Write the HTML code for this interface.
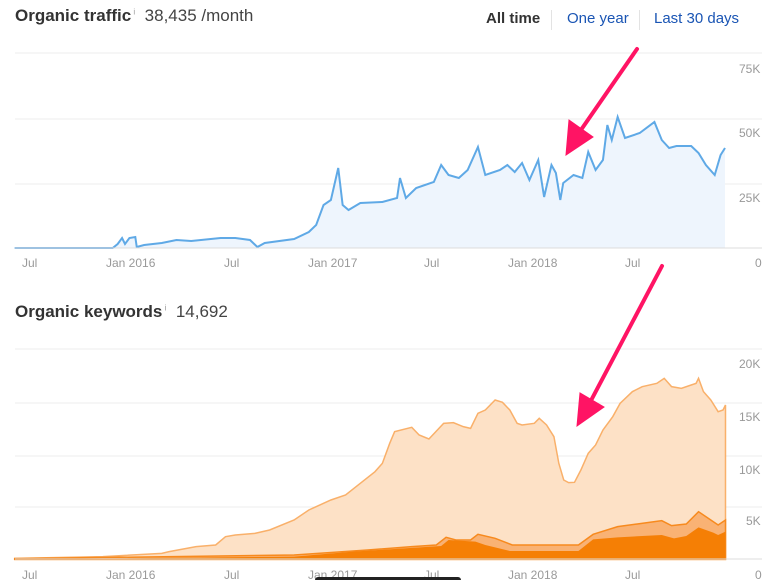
<!DOCTYPE html>
<html><head><meta charset="utf-8"><style>
body{margin:0;width:768px;height:580px;background:#fff;overflow:hidden;font-family:"Liberation Sans",sans-serif;position:relative}
.t{position:absolute;white-space:nowrap}
</style></head><body>
<div class="t" style="left:15px;top:6px;font-size:17px;color:#333"><b>Organic traffic</b><sup style="font-size:8px;color:#999"> i</sup>&nbsp; <span style="color:#444">38,435 /month</span></div>
<div class="t" style="left:486px;top:10px;font-size:15px;color:#333"><b>All time</b></div>
<div class="t" style="left:551px;top:10px;width:1px;height:20px;background:#e3e3e3"></div>
<div class="t" style="left:567px;top:10px;font-size:15px;color:#1a55b4">One year</div>
<div class="t" style="left:639px;top:10px;width:1px;height:20px;background:#e3e3e3"></div>
<div class="t" style="left:654px;top:10px;font-size:15px;color:#1a55b4">Last 30 days</div>
<div class="t" style="left:15px;top:302px;font-size:17px;color:#333"><b>Organic keywords</b><sup style="font-size:8px;color:#999"> i</sup>&nbsp; <span style="color:#444">14,692</span></div>
<svg width="768" height="580" style="position:absolute;left:0;top:0" font-family="Liberation Sans,sans-serif">
<g stroke="#ececec" stroke-width="1">
<line x1="15" y1="53" x2="762" y2="53"/><line x1="15" y1="119" x2="762" y2="119"/><line x1="15" y1="184" x2="762" y2="184"/>
<line x1="15" y1="349" x2="762" y2="349"/><line x1="15" y1="403" x2="762" y2="403"/><line x1="15" y1="456" x2="762" y2="456"/><line x1="15" y1="507" x2="762" y2="507"/>
</g>
<g transform="scale(0.4902,0.33333)">
<path d="M30,744 L230,744 240,732 249,714 255,732 264,714 276,711 279,741 294,735 330,729 360,720 390,723 450,714 480,714 510,720 525,741 540,729 600,717 630,696 645,675 660,615 675,600 690,504 699,615 711,630 735,609 780,606 810,594 816,534 828,594 849,564 885,546 900,495 915,525 936,534 954,510 975,441 990,525 1020,510 1035,495 1050,516 1065,489 1080,540 1098,480 1110,591 1125,495 1134,519 1143,600 1149,549 1170,525 1188,534 1200,456 1215,510 1230,480 1239,375 1248,420 1260,351 1275,414 1305,399 1335,366 1350,420 1365,444 1380,438 1410,438 1425,459 1440,495 1458,525 1467,480 1470,465 1479,444 L1479,744 Z" fill="#eef5fd"/>
<path d="M30,744 L230,744 240,732 249,714 255,732 264,714 276,711 279,741 294,735 330,729 360,720 390,723 450,714 480,714 510,720 525,741 540,729 600,717 630,696 645,675 660,615 675,600 690,504 699,615 711,630 735,609 780,606 810,594 816,534 828,594 849,564 885,546 900,495 915,525 936,534 954,510 975,441 990,525 1020,510 1035,495 1050,516 1065,489 1080,540 1098,480 1110,591 1125,495 1134,519 1143,600 1149,549 1170,525 1188,534 1200,456 1215,510 1230,480 1239,375 1248,420 1260,351 1275,414 1305,399 1335,366 1350,420 1365,444 1380,438 1410,438 1425,459 1440,495 1458,525 1467,480 1470,465 1479,444" fill="none" stroke="#5fa9e6" stroke-width="2" vector-effect="non-scaling-stroke"/>
</g>
<g transform="translate(0,290) scale(0.4902,0.33333)">
<path d="M30,805 210,800 330,790 345,785 400,770 440,765 460,740 480,735 520,730 550,720 600,690 630,660 675,630 705,615 735,580 765,545 780,520 795,460 805,425 840,412 855,435 875,447 905,400 925,398 945,410 960,415 975,370 990,360 1010,330 1025,337 1040,360 1055,400 1065,405 1090,400 1100,385 1115,405 1130,440 1140,520 1150,570 1160,578 1172,577 1185,540 1200,490 1215,465 1230,420 1250,380 1265,340 1290,305 1310,290 1340,280 1355,265 1370,290 1390,295 1410,285 1420,280 1425,265 1435,305 1450,330 1465,365 1475,360 1480,345 1480,808 30,808Z" fill="#fde1c6" stroke="#f9b06a" stroke-width="1.5" vector-effect="non-scaling-stroke"/>
<path d="M30,806 600,795 750,780 840,770 890,765 910,742 930,750 960,750 975,733 1010,745 1045,765 1135,765 1180,765 1210,733 1260,710 1300,702 1350,692 1370,707 1400,702 1425,665 1450,690 1465,705 1480,690 1480,808 30,808Z" fill="#f9b274" stroke="#f78a1e" stroke-width="1.5" vector-effect="non-scaling-stroke"/>
<path d="M30,808 600,800 720,785 900,768 915,750 970,755 990,765 1040,783 1180,783 1210,748 1260,742 1350,735 1375,745 1400,738 1425,712 1455,728 1465,735 1480,725 1480,808Z" fill="#f57f05"/>
</g>
<line x1="15" y1="248" x2="762" y2="248" stroke="#dcdcdc"/>
<line x1="15" y1="559" x2="762" y2="559" stroke="#dcdcdc"/>
<g fill="#999" font-size="12">
<text x="739" y="73">75K</text><text x="739" y="137">50K</text><text x="739" y="202">25K</text><text x="755" y="267">0</text>
<text x="22" y="267">Jul</text><text x="106" y="267">Jan 2016</text><text x="224" y="267">Jul</text><text x="308" y="267">Jan 2017</text><text x="424" y="267">Jul</text><text x="508" y="267">Jan 2018</text><text x="625" y="267">Jul</text>
<text x="739" y="368">20K</text><text x="739" y="421">15K</text><text x="739" y="474">10K</text><text x="746" y="525">5K</text><text x="755" y="579">0</text>
<text x="22" y="579">Jul</text><text x="106" y="579">Jan 2016</text><text x="224" y="579">Jul</text><text x="308" y="579">Jan 2017</text><text x="424" y="579">Jul</text><text x="508" y="579">Jan 2018</text><text x="625" y="579">Jul</text>
</g>
<rect x="315" y="577" width="146" height="6" rx="3" fill="#222"/>
<g fill="#ff1464" stroke="#ff1464" stroke-linecap="round">
<line x1="637" y1="49" x2="574" y2="140" stroke-width="4"/>
<path d="M566,155 L569,120 L593,137 Z"/>
<line x1="662" y1="266" x2="586" y2="410" stroke-width="4"/>
<path d="M577,426 L580,393 L604,407 Z"/>
</g>
</svg>
</body></html>
